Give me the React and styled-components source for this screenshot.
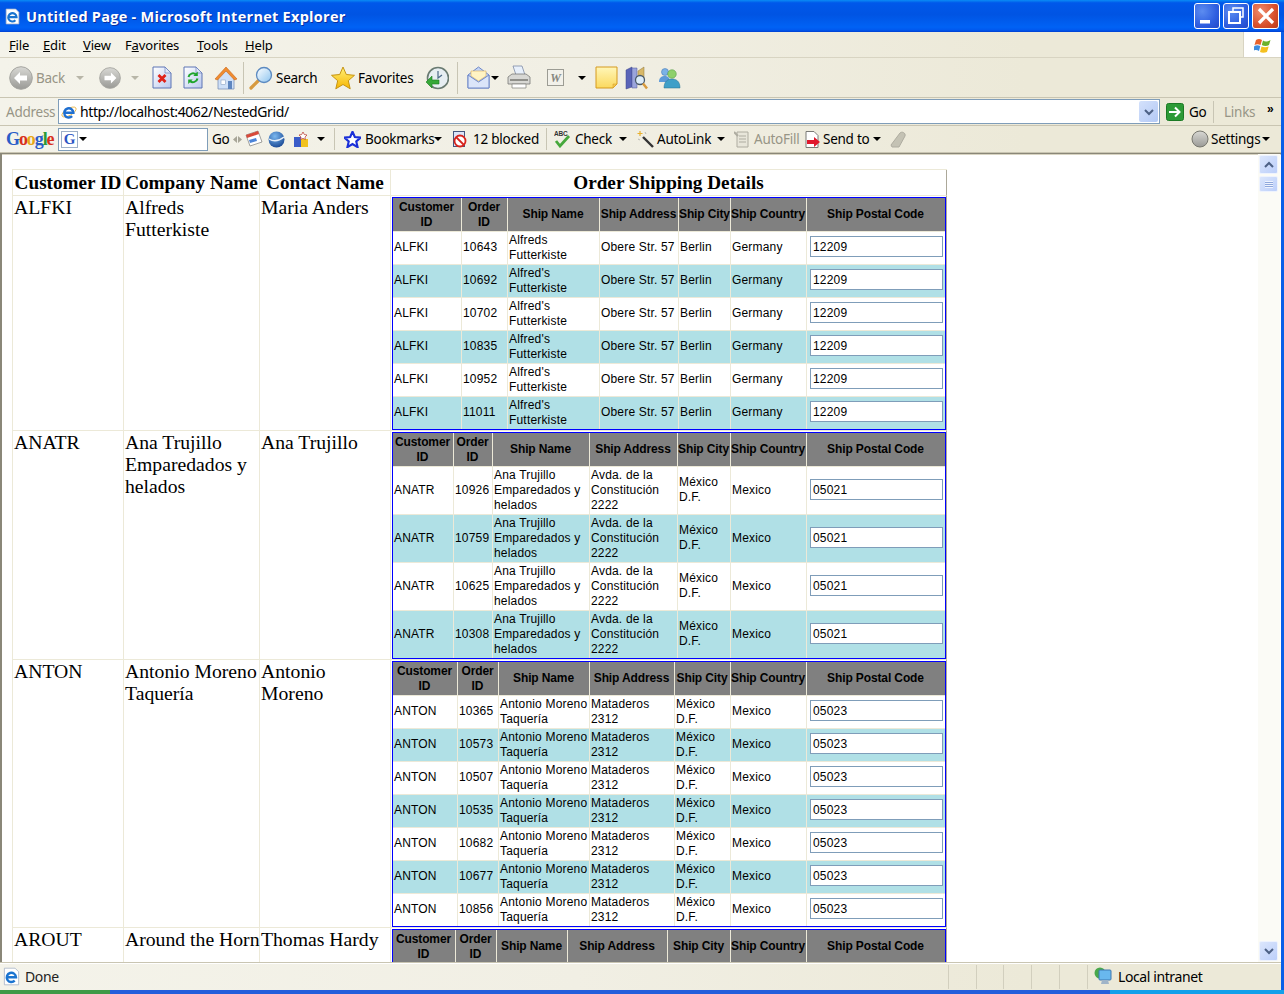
import React from "react";
import styled, { createGlobalStyle } from "styled-components";

const Global = createGlobalStyle`
  html, body { margin: 0; padding: 0; height: 994px; overflow: hidden; background: #fff; }
  * { box-sizing: border-box; }
`;

const UI = `"Noto Sans", "Liberation Sans", sans-serif`;
const chrome = `linear-gradient(90deg, #f4f3ea 0, #f1efe4 45%, #ece9d8 80%)`;

const Window = styled.div`
  width: 1284px; height: 994px; display: flex; flex-direction: column; overflow: hidden;
  background: #0a5fe8;
`;
const TitleBar = styled.header`
  height: 32px; flex: none; display: flex; align-items: center; padding: 0 5px 0 4px;
  background: linear-gradient(180deg, #0a8cf5 0, #0058ea 9%, #0054e3 45%, #0062f5 85%, #0058ee 94%, #003fd0 100%);
`;
const TitleText = styled.h1`
  margin: 0 0 0 5px; flex: 1; font: 700 14.5px "Open Sans", "Liberation Sans", sans-serif;
  letter-spacing: .27px; color: #fff; text-shadow: 1px 1px 0 #0a2fa0; white-space: pre;
`;
const Caption = styled.button`
  width: ${p => p.$close ? 27 : 26}px; height: 26px; margin-left: 3px; padding: 0; display: flex; align-items: center; justify-content: center;
  border: 1px solid #fff; border-radius: 3px;
  background: ${p => p.$close
    ? "radial-gradient(circle at 30% 30%, #ee8a6c, #d8502c 60%, #b83a1c)"
    : "radial-gradient(circle at 30% 30%, #5c8cf0, #2f5fe0 60%, #2348c8)"};
`;
const Chrome = styled.div`
  flex: none; margin-right: 3px; background: ${chrome};
`;
const MenuBar = styled(Chrome)`
  height: 26px; display: flex; align-items: center; border-bottom: 1px solid #d8d4c2; position: relative;
`;
const MenuList = styled.nav`
  display: flex; flex: 1; padding-left: 9px; font: 13px ${UI}; color: #000; letter-spacing: -.15px;
`;
const MenuItem = styled.span`
  flex: none; width: ${p => p.$w}px; white-space: nowrap;
`;
const Accel = styled.span`text-decoration: underline;`;
const FlagBox = styled.div`
  width: 38px; height: 25px; background: #fff; border-left: 1px solid #d8d4c2; display: flex; align-items: center; justify-content: center;
`;
const Bar = styled(Chrome)`
  height: ${p => p.$h}px; display: flex; align-items: center; padding-left: ${p => p.$pl || 0}px;
  border-bottom: 1px solid #c9c5b2; font: 13.5px ${UI}; color: #000; letter-spacing: -.25px; white-space: nowrap;
`;
const Slot = styled.span`
  flex: none; display: inline-flex; align-items: center; justify-content: center; margin-left: ${p => p.$ml || 0}px;
`;
const Label = styled.span`
  flex: none; display: inline-block; margin-left: ${p => p.$ml || 0}px; width: ${p => p.$w}px;
  color: ${p => p.$muted ? "#979586" : "#000"};
`;
const Caret = styled.span`
  flex: none; display: inline-block; margin-left: ${p => p.$ml || 0}px; width: 0; height: 0;
  border-style: solid; border-width: 4px 4px 0; border-color: ${p => p.$muted ? "#b8b6a8" : "#000"} transparent transparent;
`;
const Sep = styled.span`
  flex: none; display: inline-block; width: 1px; height: ${p => p.$h || 22}px; margin-left: ${p => p.$ml || 0}px; background: #c8c5b4;
`;
const AddressBox = styled.div`
  width: 1102px; height: 25px; margin-left: 4px; border: 1px solid #7f9db9; background: #fff; display: flex; align-items: center; padding-left: 2px;
  font-size: 14px;
`;
const UrlText = styled.span`
  margin-left: 3px; letter-spacing: -.4px;
`;
const DropButton = styled.span`
  width: 19px; height: 21px; margin-left: auto; margin-right: 1px; border-radius: 2px; background: linear-gradient(135deg, #d4e1fb, #b3c9f5);
  display: flex; align-items: center; justify-content: center;
`;
const Chevrons = styled.span`
  flex: none; margin-left: 12px; margin-bottom: 6px; font: 700 12px "Liberation Sans", sans-serif; color: #000;
`;
const GoogleMark = styled.span`
  flex: none; width: 50px; font: 700 18px "Liberation Serif", serif; letter-spacing: -1.1px;
`;
const Ink = styled.span`color: ${p => p.$c};`;
const SearchField = styled.div`
  width: 150px; height: 23px; margin-left: 2px; border: 1px solid #7f9db9; background: #fff; display: flex; align-items: center; padding-left: 2px;
`;
const GoogleG = styled.span`
  width: 17px; height: 17px; border: 1px solid #9fb0c8; background: #fff; text-align: center;
  font: 700 15px/15px "Liberation Serif", serif; color: #2e56c4;
`;
const Viewport = styled.main`
  flex: 1; min-height: 0; overflow: hidden; margin-right: 3px; display: flex; background: #fff; border-left: 2px solid #8a8778;
  border-top: 1px solid #8a8778; box-shadow: inset 0 1px 0 #d8d4c2;
`;
const Page = styled.div`
  flex: none; width: 1256px; overflow: hidden; padding: 15px 0 0 10px;
`;
const OuterTable = styled.table`
  width: 935px; table-layout: fixed; border-collapse: separate; border-spacing: 0;
  border-left: 1px solid #ece9d8; border-top: 1px solid #ece9d8; color: #000;
  font: 19.7px/22px "Liberation Serif", serif;
`;
const OuterHead = styled.th`
  height: 26px; padding: 1px 0 0 0; font-size: 19.2px; font-weight: 700; text-align: center; white-space: nowrap;
  border-right: 1px solid ${p => p.$last ? "#aca899" : "#ece9d8"}; border-bottom: 1px solid #ece9d8;
`;
const OuterCell = styled.td`
  padding: ${p => p.$nest ? "1px 0 0 1px" : "0 0 0 1px"}; vertical-align: top;
  border-right: 1px solid ${p => p.$last ? "#aca899" : "#ece9d8"}; border-bottom: 1px solid #ece9d8;
`;
const NestTable = styled.table`
  width: 554px; table-layout: fixed; border-collapse: separate; border-spacing: 0;
  border: 1px solid #0000ff; font: 12px/15px "Liberation Sans", Arial, sans-serif; letter-spacing: .18px;
`;
const NestHead = styled.th`
  padding: 0 1px 0 0; height: 33px; background: #808080; color: #000; font-weight: 700; text-align: center; white-space: pre;
  border-left: ${p => p.$first ? "0" : "1px solid #ece9d8"}; letter-spacing: -.12px;
`;
const NestRow = styled.tr`
  height: ${p => p.$h}px; background: ${p => p.$alt ? "#b0e0e6" : "#fff"};
`;
const NestCell = styled.td`
  padding: 0 0 ${p => p.$lift ? 2 : 0}px 1px; vertical-align: middle; white-space: pre; overflow: hidden;
  border-left: ${p => p.$first ? "0" : "1px solid #ece9d8"}; border-top: 1px solid #ece9d8;
`;
const PostalInput = styled.input`
  display: block; width: 133px; height: 21px; margin: 0 0 ${p => p.$mb}px 2px; padding: 0 2px; border: 1px solid #7f9db9; background: #fff;
  font: 12px "Liberation Sans", Arial, sans-serif; letter-spacing: .18px; color: #000; outline: none;
`;
const Scrollbar = styled.aside`
  flex: none; width: 22px; padding: 1px 2px 0 1px; display: flex; flex-direction: column; gap: 2px;
  background: #fbfbf6;
`;
const ScrollBtn = styled.div`
  height: ${p => p.$h}px; flex: none; border: 1px solid #eef3fe; border-radius: 2px; background: linear-gradient(135deg, #dbe6fc, #bccffa);
  display: flex; align-items: center; justify-content: center; ${p => p.$end ? "margin-top: auto; margin-bottom: 1px;" : ""}
`;
const GripLines = styled.span`
  width: 8px; height: 7px; background: repeating-linear-gradient(180deg, #eef3fe 0 1px, #8fa8dc 1px 2px);
`;
const StatusBar = styled.footer`
  flex: none; height: 28px; margin-right: 3px; display: flex; align-items: center; padding-left: 2px;
  background: ${chrome}; border-top: 1px solid #c9c5b2; box-shadow: inset 0 1px 0 #fff; font: 14px ${UI}; letter-spacing: -.4px; color: #000;
`;
const StatusText = styled.span`
  width: 923px; margin-left: 4px; color: #222;
`;
const StatusCell = styled.span`
  flex: none; width: ${p => p.$w}px; height: 24px; border-left: 1px solid #d2cfbe; display: flex; align-items: center; padding-left: 6px; gap: 5px;
`;
const Taskbar = styled.div`
  flex: none; height: 4px; display: flex; background: #245edb;
`;
const StartEdge = styled.span`width: 110px; background: #3f9a48;`;
const TrayEdge = styled.span`width: 174px; margin-left: auto; background: #12a0ea;`;
const Hidden = styled.svg`position: absolute; width: 0; height: 0;`;

const Defs = () => (
  <Hidden aria-hidden="true">
    <defs>
      <linearGradient id="gray" x1="0" y1="0" x2="0" y2="1"><stop offset="0" stopColor="#d8d8d4" /><stop offset="1" stopColor="#9a9a96" /></linearGradient>
      <linearGradient id="doc" x1="0" y1="0" x2="1" y2="1"><stop offset="0" stopColor="#fff" /><stop offset="1" stopColor="#b9c8ee" /></linearGradient>
      <linearGradient id="note" x1="0" y1="0" x2="0" y2="1"><stop offset="0" stopColor="#fff6b8" /><stop offset="1" stopColor="#fbd95e" /></linearGradient>
      <linearGradient id="star" x1="0" y1="0" x2="0" y2="1"><stop offset="0" stopColor="#fff27a" /><stop offset="1" stopColor="#f7b500" /></linearGradient>
      <linearGradient id="lens" x1="0" y1="0" x2="1" y2="1"><stop offset="0" stopColor="#fff" /><stop offset="1" stopColor="#8cc4f0" /></linearGradient>
      <radialGradient id="globe" cx=".4" cy=".3" r=".8"><stop offset="0" stopColor="#7ab8f0" /><stop offset="1" stopColor="#123f8c" /></radialGradient>
    </defs>
  </Hidden>
);

const Svg = ({ w, h = w, vb, children }) => <svg width={w} height={h} viewBox={vb || `0 0 ${w} ${h}`} aria-hidden="true">{children}</svg>;

const IEPage = ({ size = 16 }) => (
  <Svg w={size} vb="0 0 16 16">
    <path d="M2 1h9l3 3v11H2z" fill="#fff" stroke="#a8b4c8" strokeWidth=".7" />
    <path d="M4.200 8.600h7.600a3.900 3.900 0 1 0-1.100 2.900" fill="none" stroke="#1a74d0" strokeWidth="2" />
  </Svg>
);
const IESmall = () => (
  <Svg w={16} vb="0 0 16 16">
    <ellipse cx="8" cy="8" rx="8" ry="3.400" transform="rotate(-30 8 8)" fill="none" stroke="#e8b23c" strokeWidth=".8" />
    <path d="M3.400 8.800h9a4.600 4.600 0 1 0-1.300 3.300" fill="none" stroke="#1f6fd0" strokeWidth="2.400" />
  </Svg>
);
const Nav = ({ size, back }) => (
  <Svg w={size} vb="0 0 24 24">
    <circle cx="12" cy="12" r="11.300" fill="url(#gray)" stroke="#a5a5a0" />
    <path d={back ? "M5 12l6-6v3.600h7v4.800h-7V18z" : "M19 12l-6-6v3.600H6v4.800h7V18z"} fill="#fff" />
  </Svg>
);
const DocShape = ({ children }) => (
  <Svg w={20} h={23} vb="0 0 20 23">
    <path d="M1 1h12l6 6v15H1z" fill="url(#doc)" stroke="#5c74b4" />
    <path d="M13 1v6h6z" fill="#dfe6f8" stroke="#5c74b4" strokeWidth=".6" />
    {children}
  </Svg>
);
const Stop = () => <DocShape><path d="M6.500 9l7 7m0-7l-7 7" stroke="#e0231a" strokeWidth="2.800" /></DocShape>;
const Refresh = () => (
  <DocShape>
    <path d="M5.500 11a4.500 4.500 0 0 1 7.500-2.400M14.500 12.500a4.500 4.500 0 0 1-7.500 2.400" fill="none" stroke="#1ea52c" strokeWidth="2" />
    <path d="M14.800 5.500v4.500h-4.500zM5.200 18v-4.500h4.500z" fill="#1ea52c" />
  </DocShape>
);
const Home = () => (
  <Svg w={24} vb="0 0 24 24">
    <path d="M4 11l8-8 8 8v12H4z" fill="#cfe0f7" stroke="#7b92b8" strokeWidth=".8" />
    <path d="M1 13L12 1l11 12-2.500 1L12 5 3.500 14z" fill="#f08c30" stroke="#c8641a" strokeWidth=".6" />
    <rect x="14" y="15" width="4" height="8" fill="#5f86bf" />
    <rect x="7" y="14" width="4.500" height="4.500" fill="#fff" stroke="#7b92b8" strokeWidth=".5" />
  </Svg>
);
const Search = () => (
  <Svg w={24} vb="0 0 24 24">
    <path d="M9.500 14.500L2 22" stroke="#d79a3e" strokeWidth="3.200" strokeLinecap="round" />
    <circle cx="15" cy="9" r="7.500" fill="url(#lens)" stroke="#5c8ac0" strokeWidth="1.300" />
  </Svg>
);
const Star = ({ size = 24, hollow }) => (
  <Svg w={size} vb="0 0 24 24">
    <path d="M12 1l3.300 7.500 8.200.8-6.200 5.400 1.900 8.100L12 18.500 4.800 22.800l1.900-8.100L.5 9.300l8.200-.8z"
      fill={hollow ? "#fff" : "url(#star)"} stroke={hollow ? "#1a2fd8" : "#c69412"} strokeWidth={hollow ? 3 : 1} />
  </Svg>
);
const History = () => (
  <Svg w={24} vb="0 0 24 24">
    <circle cx="13" cy="12" r="10.500" fill="#e7eef2" stroke="#6a7b72" strokeWidth="1.600" />
    <path d="M13 5v7l4-3" fill="none" stroke="#4c6a88" strokeWidth="1.200" />
    <path d="M14 14H7V10l-6 6 6 6v-4h7z" fill="#36a838" stroke="#1c7a20" strokeWidth=".6" />
  </Svg>
);
const Mail = () => (
  <Svg w={23} vb="0 0 23 23">
    <path d="M1 9L11.500 1 22 9v13H1z" fill="#c4d4f4" stroke="#6f88c8" />
    <path d="M4 10V5h15v5l-7.500 5z" fill="#fff3c4" stroke="#d8b05a" strokeWidth=".6" />
    <path d="M1 9l10.500 7L22 9v13H1z" fill="#dbe5f9" stroke="#6f88c8" />
  </Svg>
);
const Printer = () => (
  <Svg w={25} vb="0 0 25 25">
    <path d="M7 1h9l3 9H10z" fill="#e8f0fb" stroke="#7f8ca6" strokeWidth=".8" />
    <path d="M2 12l4-3h14l4 3v7H2z" fill="#d8d8d4" stroke="#7a7a76" strokeWidth=".8" />
    <path d="M6 19h14v4H6z" fill="#fff" stroke="#8a8a86" strokeWidth=".8" />
    <rect x="4" y="14" width="18" height="2" fill="#8f8f8a" />
  </Svg>
);
const WordBox = () => (
  <Svg w={17} vb="0 0 17 17">
    <rect x=".5" y=".5" width="16" height="16" fill="#f2f1ea" stroke="#9c9c94" />
    <text x="8.500" y="13" fontSize="12" fontFamily="Liberation Serif" fontStyle="italic" fontWeight="700" textAnchor="middle" fill="#86867e">W</text>
  </Svg>
);
const Note = () => (
  <Svg w={23} vb="0 0 23 23">
    <path d="M1 1h21v17l-4 4H1z" fill="url(#note)" stroke="#d59a1e" />
    <path d="M22 18h-4v4z" fill="#f2c850" stroke="#d59a1e" strokeWidth=".5" />
  </Svg>
);
const Research = () => (
  <Svg w={24} vb="0 0 24 24">
    <path d="M1 4l6-3v20l-6 2z" fill="#5a64b8" stroke="#3c4488" strokeWidth=".5" />
    <path d="M7 2h5v20H7z" fill="#9aa4dc" stroke="#4c5498" strokeWidth=".5" />
    <path d="M13 5l6-4v12h-6z" fill="#d8b868" stroke="#8c743a" strokeWidth=".5" />
    <circle cx="15" cy="14" r="4.500" fill="#dcecfa" stroke="#4a5a6a" strokeWidth="1.300" />
    <path d="M18 17.500l4 5" stroke="#d79a3e" strokeWidth="2.500" />
  </Svg>
);
const People = () => (
  <Svg w={24} vb="0 0 24 24">
    <circle cx="8" cy="6" r="3.500" fill="#7bb2e6" stroke="#3a70b0" strokeWidth=".5" />
    <path d="M2 16c0-5 3-6 6-6s5 2 5 6z" fill="#5d9ad8" />
    <circle cx="15" cy="8" r="4.300" fill="#8ed06a" stroke="#4c9440" strokeWidth=".5" />
    <path d="M7 22c0-7 4-9 8-9s8 2 8 9z" fill="#3f9fc8" stroke="#27708f" strokeWidth=".5" />
  </Svg>
);
const Flag = () => (
  <Svg w={18} h={19} vb="0 0 18 19">
    <path d="M2 5c2-1.500 4-1.500 6 0L6.500 10c-2-1-4-1-6 0z" fill="#e8622c" />
    <path d="M9 5.500c2 1.500 4 1.500 7.500-.5L15 10c-2.500 1.500-5 1-7.200 0z" fill="#6cb22c" />
    <path d="M.3 11c2-1 4-1 6 0L5 16c-2-1.200-4-1.200-6 0z" fill="#3c8ce0" />
    <path d="M7.500 11.500c2.500 1 4.500 1 7.200 0L13 17c-2.500 1-5 1-7 0z" fill="#f4c020" />
  </Svg>
);
const Go = () => (
  <Svg w={18} vb="0 0 18 18">
    <rect x=".5" y=".5" width="17" height="17" rx="2" fill="#2c9a36" stroke="#1b7a24" />
    <path d="M3 9h10M9 4.500L13.500 9 9 13.500" fill="none" stroke="#fff" strokeWidth="2" />
  </Svg>
);
const Chevron = ({ up, size = 10 }) => (
  <Svg w={size} vb="0 0 10 10"><path d={up ? "M1 7l4-4 4 4" : "M1 3l4 4 4-4"} fill="none" stroke="#4d6185" strokeWidth="2" /></Svg>
);
const Shuttle = () => <Svg w={9} h={7} vb="0 0 9 7"><path d="M4 0L0 3.500 4 7zM5 0l4 3.500L5 7z" fill="#a8a698" /></Svg>;
const CalendarIcon = () => (
  <Svg w={18} vb="0 0 18 18">
    <path d="M1 5l12-4 4 11-12 4z" fill="#fff" stroke="#8a8a86" strokeWidth=".8" />
    <path d="M1 5l12-4 1 3L2 8z" fill="#d84a3a" />
    <path d="M4 10l7-2 1 3-7 2z" fill="#4c84d8" />
  </Svg>
);
const EarthIcon = () => (
  <Svg w={17} vb="0 0 17 17">
    <circle cx="8.500" cy="8.500" r="8" fill="url(#globe)" />
    <path d="M1 8c5 3 10 2 15-2" fill="none" stroke="#e8f0fa" strokeWidth="1.400" />
  </Svg>
);
const ToolsIcon = () => (
  <Svg w={17} vb="0 0 17 17">
    <rect x="1" y="6" width="8" height="10" fill="#3a5cc8" />
    <rect x="8" y="8" width="7" height="8" fill="#f2c21e" />
    <path d="M10 1l1.300 2.500L14 4l-2 2 .4 2.500L10 7.300 7.600 8.500 8 6 6 4l2.700-.5z" fill="#fff" stroke="#b8342a" strokeWidth=".7" />
  </Svg>
);
const Blocked = () => (
  <Svg w={17} vb="0 0 17 17">
    <rect x="1.500" y=".5" width="11" height="15" fill="#dbe5f9" stroke="#45557c" />
    <circle cx="8" cy="10" r="5.500" fill="#fff" stroke="#d8241c" strokeWidth="1.800" />
    <path d="M4 6l8 8" stroke="#d8241c" strokeWidth="1.800" />
  </Svg>
);
const Spell = () => (
  <Svg w={18} vb="0 0 18 18">
    <text x="0" y="6" fontSize="6.500" fontWeight="700" fontFamily="Liberation Sans" fill="#333">ABC</text>
    <path d="M2 11l4 5 9-10" fill="none" stroke="#46a83c" strokeWidth="2.800" />
  </Svg>
);
const Wand = () => (
  <Svg w={17} vb="0 0 17 17">
    <path d="M6 6l10 10" stroke="#333" strokeWidth="2.400" />
    <path d="M3 0v5M.5 2.500h5" stroke="#e8b02c" strokeWidth="1.200" />
    <path d="M8 1l1 2M1 8l2 1" stroke="#b8b8b0" strokeWidth="1" />
  </Svg>
);
const FillDoc = () => (
  <Svg w={17} vb="0 0 17 17">
    <path d="M3 1h11v15H3z" fill="#e8e6da" stroke="#aeaca0" />
    <path d="M5 5h7M5 8h7M5 11h7" stroke="#aeaca0" />
    <path d="M0 1l4 4" stroke="#aeaca0" strokeWidth="2" />
  </Svg>
);
const SendDoc = () => (
  <Svg w={17} vb="0 0 17 17">
    <path d="M2 .5h8l4 4v12H2z" fill="#fff" stroke="#7a7a76" />
    <path d="M3 9h7V6l6 5-6 5v-3H3z" fill="#e0182c" />
  </Svg>
);
const Eraser = () => (
  <Svg w={17} vb="0 0 17 17">
    <path d="M1 14L10 2c2-2 6 0 5 3L9 16H2z" fill="#c4c2b4" stroke="#aeaca0" />
  </Svg>
);
const SettingsDot = () => (
  <Svg w={18} vb="0 0 18 18"><circle cx="9" cy="9" r="8" fill="url(#gray)" stroke="#77776f" /></Svg>
);
const Intranet = () => (
  <Svg w={19} vb="0 0 19 19">
    <circle cx="6" cy="6" r="5.500" fill="#49a84c" />
    <rect x="5" y="3" width="12" height="10" rx="1" fill="#69b8ee" stroke="#3e78b0" />
    <path d="M8 13h6l1 4H7z" fill="#9fb4c8" />
  </Svg>
);

const COLS = [111, 136, 131, 556];
const HEAD = ["Customer\nID", "Order\nID", "Ship Name", "Ship Address", "Ship City", "Ship Country", "Ship Postal Code"];

const orders = (id, numbers, name, address, city, country, postal) =>
  numbers.map(([order, shipName]) => ({ id, order, name: shipName || name, address, city, country, postal }));

const GROUPS = [
  {
    id: "ALFKI", company: "Alfreds\nFutterkiste", contact: "Maria Anders",
    widths: [68, 46, 92, 79, 52, 76, 139], rowH: 33,
    rows: orders("ALFKI", [[10643, "Alfreds\nFutterkiste"], [10692], [10702], [10835], [10952], [11011]], "Alfred's\nFutterkiste", "Obere Str. 57", "Berlin", "Germany", "12209"),
  },
  {
    id: "ANATR", company: "Ana Trujillo\nEmparedados y\nhelados", contact: "Ana Trujillo",
    widths: [60, 39, 97, 88, 53, 76, 139], rowH: 48,
    rows: orders("ANATR", [[10926], [10759], [10625], [10308]], "Ana Trujillo\nEmparedados y\nhelados", "Avda. de la\nConstitución\n2222", "México\nD.F.", "Mexico", "05021"),
  },
  {
    id: "ANTON", company: "Antonio Moreno\nTaquería", contact: "Antonio\nMoreno",
    widths: [64, 41, 91, 85, 56, 76, 139], rowH: 33,
    rows: orders("ANTON", [[10365], [10573], [10507], [10535], [10682], [10677], [10856]], "Antonio Moreno\nTaquería", "Mataderos\n2312", "México\nD.F.", "Mexico", "05023"),
  },
  {
    id: "AROUT", company: "Around the Horn", contact: "Thomas Hardy",
    widths: [62, 41, 71, 100, 63, 76, 139], rowH: 33,
    rows: [],
  },
];

const PreText = styled.span`white-space: pre;`;

const DataCell = ({ value, rowH, first }) => {
  const lines = String(value).split("\n").length;
  return <NestCell $first={first} $lift={(rowH - 1 - lines * 15) % 2 !== 0}>{value}</NestCell>;
};

const Orders = ({ group }) => (
  <NestTable>
    <colgroup>{group.widths.map((w, i) => <col key={i} width={w} />)}</colgroup>
    <thead>
      <tr>{HEAD.map((h, i) => <NestHead key={h} $first={i === 0}>{h}</NestHead>)}</tr>
    </thead>
    <tbody>
      {group.rows.map((r, i) => (
        <NestRow key={r.order} $h={group.rowH} $alt={i % 2 === 1}>
          <DataCell first value={r.id} rowH={group.rowH} />
          <DataCell value={r.order} rowH={group.rowH} />
          <DataCell value={r.name} rowH={group.rowH} />
          <DataCell value={r.address} rowH={group.rowH} />
          <DataCell value={r.city} rowH={group.rowH} />
          <DataCell value={r.country} rowH={group.rowH} />
          <NestCell><PostalInput readOnly value={r.postal} $mb={group.rowH === 48 ? 2 : 3} /></NestCell>
        </NestRow>
      ))}
    </tbody>
  </NestTable>
);

export default function App() {
  return (
    <Window>
      <Global />
      <Defs />
      <TitleBar>
        <IEPage size={17} />
        <TitleText>Untitled Page - Microsoft Internet Explorer</TitleText>
        <Caption aria-label="Minimize">
          <Svg w={22} vb="0 0 22 22"><rect x="4" y="15" width="10" height="3.500" fill="#fff" /></Svg>
        </Caption>
        <Caption aria-label="Restore">
          <Svg w={22} vb="0 0 22 22"><path d="M8 6V3h10v9h-3" fill="none" stroke="#fff" strokeWidth="1.500" /><rect x="4" y="7" width="11" height="11" fill="none" stroke="#fff" strokeWidth="2" /></Svg>
        </Caption>
        <Caption $close aria-label="Close">
          <Svg w={22} vb="0 0 22 22"><path d="M4 4l14 14M18 4L4 18" stroke="#fff" strokeWidth="3.200" /></Svg>
        </Caption>
      </TitleBar>

      <MenuBar>
        <MenuList>
          <MenuItem $w={34}><Accel>F</Accel>ile</MenuItem>
          <MenuItem $w={40}><Accel>E</Accel>dit</MenuItem>
          <MenuItem $w={42}><Accel>V</Accel>iew</MenuItem>
          <MenuItem $w={72}>F<Accel>a</Accel>vorites</MenuItem>
          <MenuItem $w={48}><Accel>T</Accel>ools</MenuItem>
          <MenuItem $w={26}><Accel>H</Accel>elp</MenuItem>
        </MenuList>
        <FlagBox><Flag /></FlagBox>
      </MenuBar>

      <Bar $h={40} $pl={9}>
        <Slot><Nav size={24} back /></Slot>
        <Label $ml={3} $w={28} $muted>Back</Label>
        <Caret $ml={12} $muted />
        <Slot $ml={15}><Nav size={22} /></Slot>
        <Caret $ml={10} $muted />
        <Slot $ml={13}><Stop /></Slot>
        <Slot $ml={11}><Refresh /></Slot>
        <Slot $ml={11}><Home /></Slot>
        <Sep $ml={5} $h={32} />
        <Slot $ml={5}><Search /></Slot>
        <Label $ml={3} $w={43}>Search</Label>
        <Slot $ml={12}><Star /></Slot>
        <Label $ml={3} $w={56}>Favorites</Label>
        <Slot $ml={11}><History /></Slot>
        <Sep $ml={8} $h={32} />
        <Slot $ml={9}><Mail /></Slot>
        <Caret $ml={1} />
        <Slot $ml={7}><Printer /></Slot>
        <Slot $ml={16}><WordBox /></Slot>
        <Caret $ml={14} />
        <Slot $ml={9}><Note /></Slot>
        <Slot $ml={7}><Research /></Slot>
        <Slot $ml={8}><People /></Slot>
      </Bar>

      <Bar $h={28} $pl={6}>
        <Label $w={48} $muted>Address</Label>
        <AddressBox>
          <IESmall />
          <UrlText>http://localhost:4062/NestedGrid/</UrlText>
          <DropButton><Chevron /></DropButton>
        </AddressBox>
        <Slot $ml={6}><Go /></Slot>
        <Label $ml={5} $w={17}>Go</Label>
        <Sep $ml={7} />
        <Label $ml={10} $w={31} $muted>Links</Label>
        <Chevrons>»</Chevrons>
      </Bar>

      <Bar $h={27} $pl={6}>
        <GoogleMark>
          <Ink $c="#2a5cc8">G</Ink><Ink $c="#d8301c">o</Ink><Ink $c="#e8a818">o</Ink><Ink $c="#2a5cc8">g</Ink><Ink $c="#2c9a36">l</Ink><Ink $c="#d8301c">e</Ink>
        </GoogleMark>
        <SearchField><GoogleG>G</GoogleG><Caret $ml={1} /></SearchField>
        <Label $ml={4} $w={17}>Go</Label>
        <Slot $ml={4}><Shuttle /></Slot>
        <Slot $ml={3}><CalendarIcon /></Slot>
        <Slot $ml={5}><EarthIcon /></Slot>
        <Slot $ml={8}><ToolsIcon /></Slot>
        <Caret $ml={7} />
        <Sep $ml={9} />
        <Slot $ml={9}><Star size={17} hollow /></Slot>
        <Label $ml={4} $w={69}>Bookmarks</Label>
        <Caret />
        <Slot $ml={10}><Blocked /></Slot>
        <Label $ml={4} $w={67}>12 blocked</Label>
        <Sep $ml={6} />
        <Slot $ml={7}><Spell /></Slot>
        <Label $ml={3} $w={37}>Check</Label>
        <Caret $ml={7} />
        <Slot $ml={10}><Wand /></Slot>
        <Label $ml={3} $w={52}>AutoLink</Label>
        <Caret $ml={8} />
        <Slot $ml={9}><FillDoc /></Slot>
        <Label $ml={3} $w={43} $muted>AutoFill</Label>
        <Slot $ml={7}><SendDoc /></Slot>
        <Label $ml={2} $w={49}>Send to</Label>
        <Caret $ml={1} />
        <Slot $ml={9}><Eraser /></Slot>
        <Slot $ml={284}><SettingsDot /></Slot>
        <Label $ml={2} $w={51}>Settings</Label>
        <Caret />
      </Bar>

      <Viewport>
        <Page>
          <OuterTable>
            <colgroup>{COLS.map(w => <col key={w} width={w} />)}</colgroup>
            <thead>
              <tr>
                <OuterHead>Customer ID</OuterHead>
                <OuterHead>Company Name</OuterHead>
                <OuterHead>Contact Name</OuterHead>
                <OuterHead $last>Order Shipping Details</OuterHead>
              </tr>
            </thead>
            <tbody>
              {GROUPS.map(g => (
                <tr key={g.id}>
                  <OuterCell>{g.id}</OuterCell>
                  <OuterCell><PreText>{g.company}</PreText></OuterCell>
                  <OuterCell><PreText>{g.contact}</PreText></OuterCell>
                  <OuterCell $nest $last><Orders group={g} /></OuterCell>
                </tr>
              ))}
            </tbody>
          </OuterTable>
        </Page>
        <Scrollbar>
          <ScrollBtn $h={19}><Chevron up /></ScrollBtn>
          <ScrollBtn $h={16}><GripLines /></ScrollBtn>
          <ScrollBtn $h={20} $end><Chevron /></ScrollBtn>
        </Scrollbar>
      </Viewport>

      <StatusBar>
        <IEPage size={19} />
        <StatusText>Done</StatusText>
        <StatusCell $w={28} />
        <StatusCell $w={27} />
        <StatusCell $w={28} />
        <StatusCell $w={28} />
        <StatusCell $w={28} />
        <StatusCell $w={190}><Intranet />Local intranet</StatusCell>
      </StatusBar>
      <Taskbar>
        <StartEdge />
        <TrayEdge />
      </Taskbar>
    </Window>
  );
}
